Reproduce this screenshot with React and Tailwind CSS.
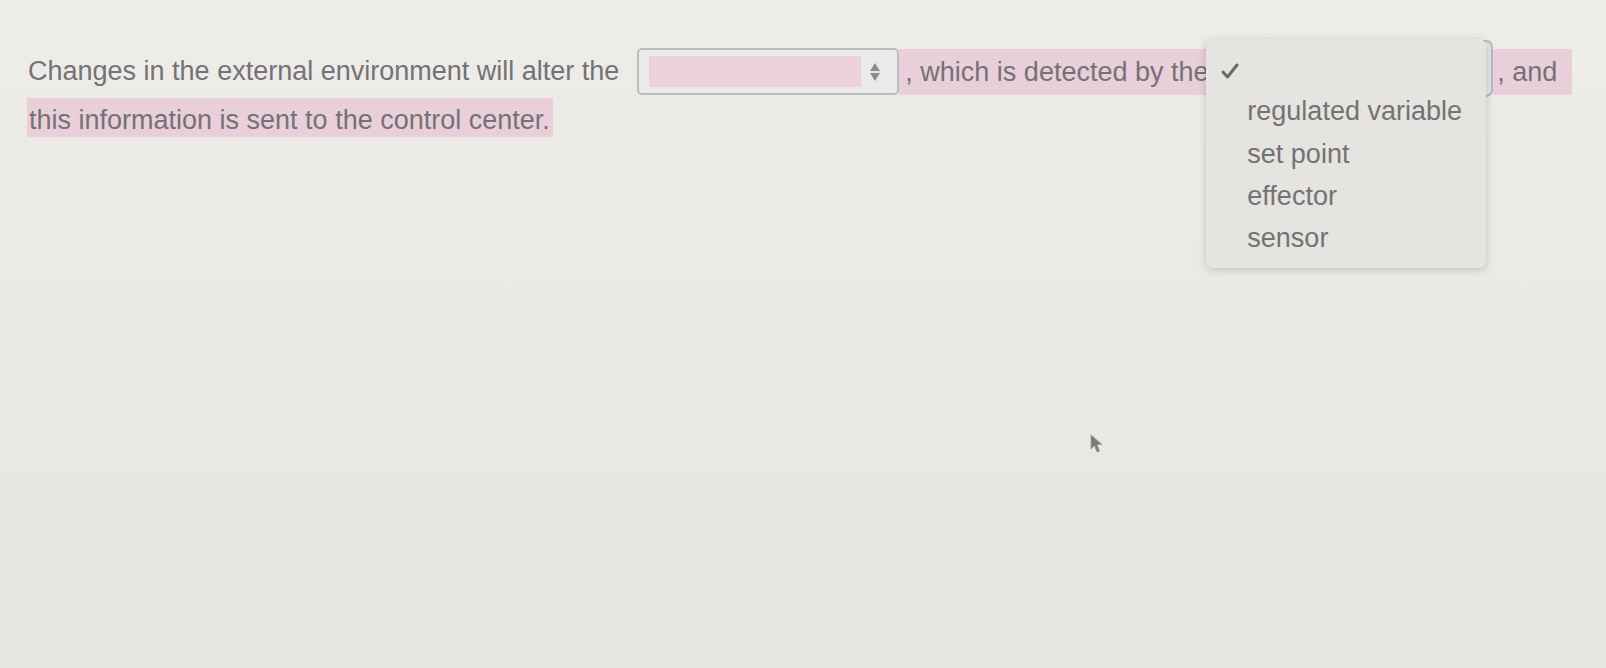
export default function App() {
  const font = { fontFamily: '"Liberation Sans", Arial, sans-serif' };
  return (
    <div
      className="w-[1606px] h-[668px] overflow-hidden bg-gradient-to-b from-[#edece8] to-[#e7e6e2] relative text-[27px] text-[#747274]"
      style={font}
    >
      <div className="pt-[48px] pl-[27px]">
        {/* line 1 */}
        <div className="flex items-stretch h-[47px]">
          <span className="flex items-center pl-[1px] pr-[18px] whitespace-nowrap">Changes in the external environment will alter the</span>
          <div className="w-[262px] shrink-0 border-2 border-[#b9bcc1] rounded-[5px] bg-[#e9eaea] flex items-center pl-[10px] pr-[8px]">
            <div className="w-[212px] h-[31px] bg-[#ecd0da]" />
            <div className="flex-1 flex flex-col items-center justify-center gap-[2px]">
              <svg width="10" height="8" viewBox="0 0 10 8"><path d="M5 0 L10 8 L0 8 Z" fill="#8a8c90" /></svg>
              <svg width="10" height="8" viewBox="0 0 10 8"><path d="M0 0 L10 0 L5 8 Z" fill="#8a8c90" /></svg>
            </div>
          </div>
          <span className="flex items-center shrink-0 bg-[#e9cfd9] pl-[6px] mt-[1px] w-[307px] whitespace-nowrap">, which is detected by the</span>
          <div className="relative shrink-0 w-[287px] mt-[-8px] mb-[-2px] border-2 border-[#b3bac4] rounded-[7px] bg-[#e4e5e6]">
            <div className="absolute left-[-2px] top-[-3px] w-[280px] h-[229px] rounded-[7px] bg-[#e5e4e0] shadow-[0_2px_8px_rgba(0,0,0,0.18)] z-10">
              <div className="pt-[15px] pl-[15px] relative">
                <div className="h-[33px] flex items-center">
                  <svg width="18" height="16" viewBox="0 0 18 16">
                    <path d="M2 9 L6.5 14 L16 2" fill="none" stroke="#6a6a6a" strokeWidth="3" strokeLinecap="round" strokeLinejoin="round" />
                  </svg>
                </div>
                <div className="pl-[26px] pt-[3px] flex flex-col">
                  <div className="h-[43px] flex items-center whitespace-nowrap">regulated variable</div>
                  <div className="h-[42px] flex items-center">set point</div>
                  <div className="h-[42px] flex items-center">effector</div>
                  <div className="h-[42px] flex items-center">sensor</div>
                </div>
              </div>
            </div>
          </div>
          <span className="flex items-center shrink-0 bg-[#e9cfd9] pl-[4px] pr-[15px] mt-[1px] whitespace-nowrap">, and</span>
        </div>
        {/* line 2 */}
        <div className="mt-[3px] flex">
          <span className="bg-[#e9cfd9] h-[39px] flex items-center pl-[2px] pr-[3px] pt-[5px] whitespace-nowrap">this information is sent to the control center.</span>
        </div>
      </div>
      {/* cursor */}
      <svg className="absolute left-[1090px] top-[434px]" width="14" height="20" viewBox="0 0 14 20">
        <path d="M1 1 L1 15 L4.5 11.5 L7 18 L9.5 17 L7 10.5 L12 10.5 Z" fill="#7a7a7a" stroke="#999" strokeWidth="0.8" />
      </svg>
    </div>
  );
}
